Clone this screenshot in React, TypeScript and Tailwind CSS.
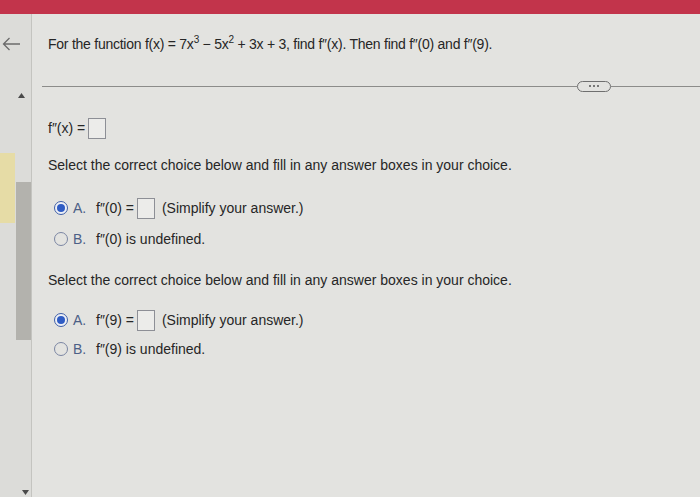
import { FC, ReactNode } from "react";

const Box: FC = () => (
  <span className="inline-block w-[18px] h-[21px] border border-[#8d8f96] bg-[#ececea] mx-[3px] align-middle" />
);

const Radio: FC<{ checked?: boolean }> = ({ checked }) =>
  checked ? (
    <span className="flex items-center justify-center w-[14px] h-[14px] rounded-full border-[1.5px] border-[#3f5fa6] bg-[#eef0f6]">
      <span className="w-[8px] h-[8px] rounded-full bg-[#2f5cc4]" />
    </span>
  ) : (
    <span className="w-[14px] h-[14px] rounded-full border-[1.5px] border-[#7b86a3]" />
  );

const Choice: FC<{ letter: string; checked?: boolean; className?: string; children: ReactNode }> = ({
  letter,
  checked,
  className,
  children,
}) => (
  <div className={`flex items-center h-[20px] pl-[6px] ${className ?? ""}`}>
    <Radio checked={checked} />
    <span className="ml-[5px] w-[23px] text-[#4c5f86]">{letter}</span>
    <span className="flex items-center">{children}</span>
  </div>
);

const FPP = "f\u2033";

export default function App() {
  return (
    <div
      className="w-[700px] h-[497px] overflow-hidden bg-[#e3e3e0] text-[#262626] text-[14px]"
      style={{ fontFamily: '"Liberation Sans", Arial, sans-serif' }}
    >
      <div className="h-[14px] bg-[#c2344b]" />
      <div className="flex h-[483px]">
        {/* left gutter */}
        <div className="w-[32px] shrink-0 border-r border-[#c4c4c0] bg-[#dcdcd9] flex flex-col">
          <svg className="mt-[23px] ml-[2px]" width="19" height="14" viewBox="0 0 19 14" fill="none">
            <path d="M18 7H1.5M7.5 1L1.5 7l6 6" stroke="#6b6b6b" strokeWidth="1.3" />
          </svg>
          <svg className="mt-[42px] ml-[18px]" width="7" height="5" viewBox="0 0 7 5">
            <path d="M3.5 0L7 5H0z" fill="#4a4a4a" />
          </svg>
          <div className="flex">
            <div className="mt-[55px] w-[15px] h-[70px] bg-[#e6dca6]" />
            <div className="mt-[84px] ml-[1px] w-[15px] h-[158px] bg-[#b3b2ad]" />
          </div>
          <div className="flex-1" />
          <svg className="mb-[2px] ml-[22px]" width="7" height="5" viewBox="0 0 7 5">
            <path d="M0 0H7L3.5 5z" fill="#4a4a4a" />
          </svg>
        </div>

        {/* main content */}
        <div className="flex-1 flex flex-col pl-[16px] pt-[20px]">
          <div className="h-[20px] flex items-center whitespace-nowrap tracking-[-0.25px]">
            For the function f(x) = 7x
            <sup className="text-[10px] leading-none relative -top-[4px]">3</sup>
            &nbsp;− 5x
            <sup className="text-[10px] leading-none relative -top-[4px]">2</sup>
            &nbsp;+ 3x + 3, find {FPP}(x). Then find {FPP}(0) and {FPP}(9).
          </div>

          <div className="mt-[26px] -ml-[6px] h-[12px] flex items-center">
            <div className="w-[535px] h-px bg-[#8c8c8a]" />
            <div className="w-[34px] h-[11px] rounded-full border border-[#6f6f6f] flex items-center justify-center gap-[2px]">
              <span className="w-[2px] h-[2px] rounded-full bg-[#555]" />
              <span className="w-[2px] h-[2px] rounded-full bg-[#555]" />
              <span className="w-[2px] h-[2px] rounded-full bg-[#555]" />
            </div>
            <div className="flex-1 h-px bg-[#8c8c8a]" />
          </div>

          <div className="mt-[25px] h-[22px] flex items-center">
            {FPP}(x) =
            <Box />
          </div>

          <div className="mt-[16px] h-[20px] flex items-center">
            Select the correct choice below and fill in any answer boxes in your choice.
          </div>

          <Choice letter="A." checked className="mt-[23px]">
            {FPP}(0) =<Box />&nbsp;(Simplify your answer.)
          </Choice>
          <Choice letter="B." className="mt-[11px]">
            {FPP}(0) is undefined.
          </Choice>

          <div className="mt-[21px] h-[20px] flex items-center">
            Select the correct choice below and fill in any answer boxes in your choice.
          </div>

          <Choice letter="A." checked className="mt-[20px]">
            {FPP}(9) =<Box />&nbsp;(Simplify your answer.)
          </Choice>
          <Choice letter="B." className="mt-[9px]">
            {FPP}(9) is undefined.
          </Choice>
        </div>
      </div>
    </div>
  );
}
